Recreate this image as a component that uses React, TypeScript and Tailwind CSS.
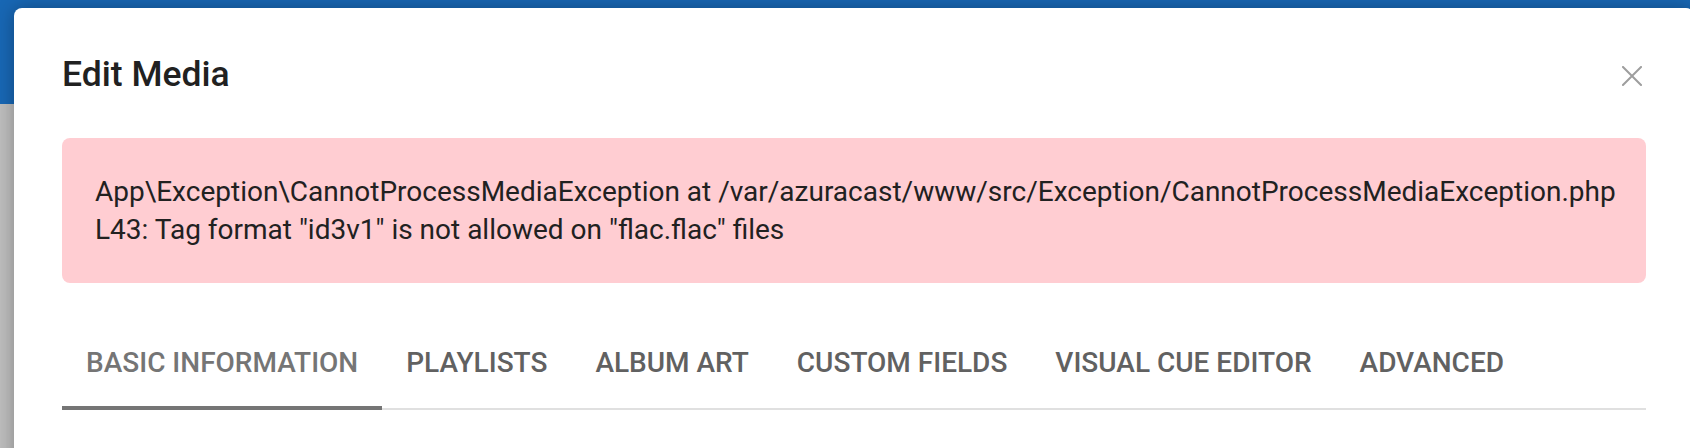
import React, { useState } from 'react';

const TABS = [
  'Basic Information',
  'Playlists',
  'Album Art',
  'Custom Fields',
  'Visual Cue Editor',
  'Advanced',
];

function CloseIcon() {
  return (
    <svg viewBox="0 0 20 20" className="h-[20px] w-[20px]" fill="none">
      <path
        d="M1 1L19 19M19 1L1 19"
        stroke="#9e9e9e"
        strokeWidth="2"
        strokeLinecap="square"
      />
    </svg>
  );
}

export default function App() {
  const [active, setActive] = useState(0);

  return (
    <div className="relative h-[448px] w-full overflow-hidden font-['Roboto','Liberation_Sans',sans-serif]">
      {/* page behind the dialog */}
      <div className="flex h-full flex-col">
        <div className="h-[104px] bg-[#1867b4]" />
        <div className="flex-1 bg-[#bdbdbd]" />
      </div>

      <div className="absolute top-[8px] left-[14px] h-[600px] w-[1680px] rounded-t-[8px] bg-white px-[48px] pt-[46px] shadow-[0_0_18px_rgba(0,0,0,0.3)]">
        <div className="flex items-center justify-between">
          <h1 className="text-[35.5px] leading-[41px] font-medium text-[#212121]">
            Edit Media
          </h1>
          <button className="mt-[2px] flex h-[28px] w-[28px] items-center justify-center">
            <CloseIcon />
          </button>
        </div>

        <div className="mt-[43px] rounded-[8px] bg-[#ffcdd2] px-[33px] py-[35px] text-[28px] leading-[37.5px] text-[#212121]">
          <div className="whitespace-nowrap">
            App\Exception\CannotProcessMediaException at
            /var/azuracast/www/src/Exception/CannotProcessMediaException.php
          </div>
          <div>L43: Tag format "id3v1" is not allowed on "flac.flac" files</div>
        </div>

        <div className="mt-[37px] border-b-2 border-[#e0e0e0]">
          <div className="-mb-[2px] flex">
            {TABS.map((tab, idx) => (
              <button
                key={tab}
                onClick={() => setActive(idx)}
                className={
                  idx === active
                    ? 'border-b-4 border-[#757575] px-[24px] pt-[28px] pb-[28px] text-[28px] leading-[30px] font-medium text-[#757575] uppercase'
                    : 'border-b-4 border-transparent px-[24px] pt-[28px] pb-[28px] text-[28px] leading-[30px] font-medium text-[#616161] uppercase'
                }
              >
                {tab}
              </button>
            ))}
          </div>
        </div>
      </div>
    </div>
  );
}
